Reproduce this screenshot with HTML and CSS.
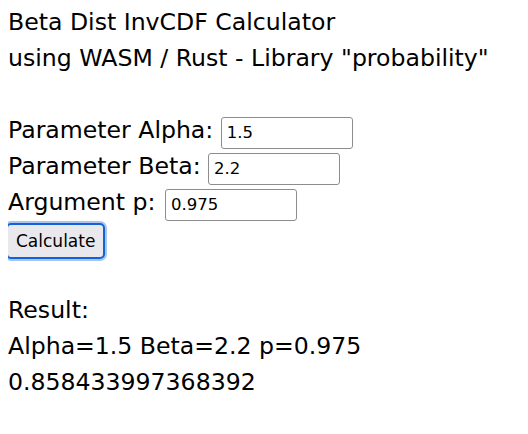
FILE: index.html
```html
<!DOCTYPE html>
<html>
<head>
<meta charset="utf-8">
<title>Beta Dist InvCDF Calculator</title>
<link rel="stylesheet" href="styles.css">
</head>
<body>
<div class="title">Beta Dist InvCDF Calculator<br>using WASM / Rust - Library "probability"</div>
<form class="form">
  <div class="row"><label for="alpha">Parameter Alpha:</label> <input id="alpha" class="field" type="text" value="1.5"></div>
  <div class="row"><label for="beta">Parameter Beta:</label> <input id="beta" class="field" type="text" value="2.2"></div>
  <div class="row"><label for="p">Argument p:</label> <input id="p" class="field field-p" type="text" value="0.975"></div>
  <div class="btnrow"><button type="button" class="calc">Calculate</button></div>
</form>
<div class="result">Result:<br>Alpha=1.5 Beta=2.2 p=0.975<br>0.858433997368392</div>
</body>
</html>
```
FILE: styles.css
```css
html, body {
  background: #ffffff;
}
body {
  margin: 4px 8px 8px 8px;
  font-family: "DejaVu Sans", Verdana, sans-serif;
  font-size: 23.6px;
  line-height: 36px;
  color: #000000;
}
.title {
  margin-bottom: 36px;
}
.form {
  margin: 0;
}
.row {
  height: 36px;
  white-space: nowrap;
}
.field {
  -webkit-appearance: none;
  appearance: none;
  box-sizing: border-box;
  width: 132px;
  height: 32px;
  margin: 0;
  padding: 0 5px;
  border: 1px solid #8d8d8d;
  border-radius: 3px;
  font-family: "DejaVu Sans", Verdana, sans-serif;
  font-size: 16.5px;
  color: #000000;
  background: #ffffff;
  vertical-align: baseline;
}
.field-p {
  margin-left: 2px;
}
.btnrow {
  height: 36px;
  padding-top: 3px;
  box-sizing: border-box;
}
.calc {
  -webkit-appearance: none;
  appearance: none;
  display: block;
  box-sizing: border-box;
  height: 36px;
  margin: 0 0 0 -2px;
  padding: 0 8px;
  border: 2px solid #1463d6;
  border-radius: 5px;
  background: #e9e9ed;
  color: #000000;
  font-family: "DejaVu Sans", Verdana, sans-serif;
  font-size: 17px;
  line-height: 32px;
  outline: none;
  box-shadow: 0 0 0 2px #a9c6ef;
}
.result {
  margin-top: 36px;
}
```
